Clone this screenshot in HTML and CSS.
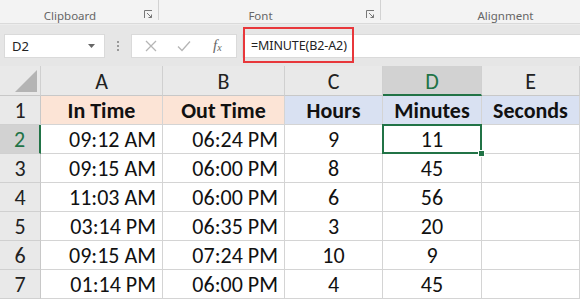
FILE: index.html
```html
<!DOCTYPE html>
<html>
<head>
<meta charset="utf-8">
<link rel="stylesheet" href="styles.css">
</head>
<body>
<div class="app">
  <div class="ribbon">
    <div class="group g-clip">
      <span class="glabel">Clipboard</span>
      <svg class="launcher" width="9" height="9" viewBox="0 0 9 9"><path d="M0.5 8V0.5H8" fill="none" stroke="#777" stroke-width="1"/><path d="M3 3L7.5 7.5M4.5 7.5H7.5V4.5" fill="none" stroke="#777" stroke-width="1"/></svg>
    </div>
    <div class="group g-font">
      <span class="glabel">Font</span>
      <svg class="launcher" width="9" height="9" viewBox="0 0 9 9"><path d="M0.5 8V0.5H8" fill="none" stroke="#777" stroke-width="1"/><path d="M3 3L7.5 7.5M4.5 7.5H7.5V4.5" fill="none" stroke="#777" stroke-width="1"/></svg>
    </div>
    <div class="group g-align">
      <span class="glabel">Alignment</span>
    </div>
  </div>
  <div class="fbar">
    <div class="namebox">
      <span>D2</span>
      <svg width="7" height="4" viewBox="0 0 7 4"><path d="M0 0H7L3.5 4Z" fill="#666"/></svg>
    </div>
    <div class="dots"><i></i><i></i><i></i></div>
    <div class="fbtns">
      <svg width="12" height="12" viewBox="0 0 12 12"><path d="M1 1L11 11M11 1L1 11" stroke="#b5b5b5" stroke-width="1.3" fill="none"/></svg>
      <svg width="14" height="12" viewBox="0 0 14 12"><path d="M1 6.5L5 10.5L13 1.5" stroke="#b5b5b5" stroke-width="1.3" fill="none"/></svg>
      <span class="fx">f<sub>x</sub></span>
    </div>
    <div class="finput">
      <span class="formula">=MINUTE(B2-A2)</span>
    </div>
  </div>
  <div class="sheet">
    <div class="ch corner"><span class="tri"></span></div>
    <div class="ch">A</div>
    <div class="ch">B</div>
    <div class="ch">C</div>
    <div class="ch sel">D</div>
    <div class="ch">E</div>

    <div class="rh">1</div>
    <div class="c hd peach">In Time</div>
    <div class="c hd peach">Out Time</div>
    <div class="c hd blue">Hours</div>
    <div class="c hd blue">Minutes</div>
    <div class="c hd blue">Seconds</div>

    <div class="rh sel">2</div>
    <div class="c r">09:12 AM</div>
    <div class="c r">06:24 PM</div>
    <div class="c m">9</div>
    <div class="c m active">11</div>
    <div class="c"></div>

    <div class="rh">3</div>
    <div class="c r">09:15 AM</div>
    <div class="c r">06:00 PM</div>
    <div class="c m">8</div>
    <div class="c m">45</div>
    <div class="c"></div>

    <div class="rh">4</div>
    <div class="c r">11:03 AM</div>
    <div class="c r">06:00 PM</div>
    <div class="c m">6</div>
    <div class="c m">56</div>
    <div class="c"></div>

    <div class="rh">5</div>
    <div class="c r">03:14 PM</div>
    <div class="c r">06:35 PM</div>
    <div class="c m">3</div>
    <div class="c m">20</div>
    <div class="c"></div>

    <div class="rh">6</div>
    <div class="c r">09:15 AM</div>
    <div class="c r">07:24 PM</div>
    <div class="c m">10</div>
    <div class="c m">9</div>
    <div class="c"></div>

    <div class="rh">7</div>
    <div class="c r">01:14 PM</div>
    <div class="c r">06:00 PM</div>
    <div class="c m">4</div>
    <div class="c m">45</div>
    <div class="c"></div>
  </div>
</div>
</body>
</html>
```
FILE: styles.css
```css
* { box-sizing: border-box; }
html, body { margin: 0; padding: 0; }
body { width: 580px; height: 300px; overflow: hidden; background: #fff; font-family: "Carlito", "Lato", "Liberation Sans", sans-serif; }
.app { display: flex; flex-direction: column; width: 580px; }

.ribbon { flex-shrink: 0; height: 24px; background: #f3f3f3; border-bottom: 1px solid #dadada; display: flex; }
.group { position: relative; display: flex; align-items: center; justify-content: center; border-right: 1px solid #d2d2d2; height: 20px; }
.g-clip { width: 159px; }
.g-font { width: 222px; }
.g-align { flex: 1; border-right: none; }
.glabel { font-family: "Noto Sans", "Open Sans", sans-serif; font-size: 11.5px; color: #666; margin-top: 10px; }
.g-clip .glabel { margin-left: -18px; }
.g-font .glabel { margin-left: -18px; }
.g-align .glabel { margin-left: 50px; }
.launcher { position: absolute; right: 5px; top: 10px; }

.fbar { flex-shrink: 0; height: 42px; background: #e6e6e6; display: flex; align-items: center; padding: 0 0 0 4px; border-top: 1px solid #ececec; }
.namebox { width: 101px; height: 24px; background: #fff; border: 1px solid #dadada; display: flex; align-items: center; justify-content: space-between; padding: 0 9px 0 7px; font-family: "Noto Sans", "Open Sans", sans-serif; font-size: 13px; color: #222; }
.dots { width: 26px; display: flex; flex-direction: column; align-items: center; gap: 2px; }
.dots i { display: block; width: 2px; height: 2px; background: #999; }
.fbtns { width: 106px; height: 24px; background: #fff; border: 1px solid #dadada; display: flex; align-items: center; padding-left: 13px; }
.fbtns svg:first-child { margin-right: 20px; }
.fbtns svg:nth-child(2) { margin-right: 22px; }
.fx { font-family: "Liberation Serif", "DejaVu Serif", serif; font-style: italic; font-size: 15px; color: #666; line-height: 1; }
.fx sub { font-size: 10px; vertical-align: -1px; }
.finput { flex: 1; height: 24px; background: #fff; border: 1px solid #dadada; border-right: none; margin-left: 5px; display: flex; align-items: center; padding-left: 8px; }
.formula { position: relative; font-family: "Noto Sans", "Open Sans", sans-serif; font-size: 12.5px; color: #222; letter-spacing: -0.1px; }
.formula::after { content: ""; position: absolute; left: -8px; right: -7px; top: -10px; bottom: -9px; border: 2px solid #e8373b; }

.sheet { flex-shrink: 0; display: grid; grid-template-columns: 41px 122px 122px 98px 99px 1fr; grid-template-rows: 30px repeat(7, 29px); }
.ch { background: #e9e9e9; border-right: 1px solid #d0d0d0; border-bottom: 1px solid #c8c8c8; display: flex; align-items: center; justify-content: center; font-size: 22px; color: #222; padding-top: 2px; }
.ch.sel { background: #d2d2d2; color: #217346; border-bottom: 2px solid #217346; }
.corner { position: relative; }
.tri { position: absolute; right: 3px; bottom: 3px; width: 0; height: 0; border-left: 22px solid transparent; border-bottom: 22px solid #b4b4b4; }
.rh { background: #e9e9e9; border-right: 1px solid #c8c8c8; border-bottom: 1px solid #d0d0d0; display: flex; align-items: center; justify-content: center; font-size: 22px; color: #222; }
.rh.sel { background: #d2d2d2; color: #217346; border-right: 2px solid #217346; }
.c { border-right: 1px solid #d4d4d4; border-bottom: 1px solid #d4d4d4; display: flex; align-items: center; font-size: 22px; color: #111; white-space: nowrap; }
.c.r { justify-content: flex-end; padding-right: 6px; }
.c.m { justify-content: center; }
.c.hd { justify-content: center; font-weight: bold; }
.peach { background: #fce4d6; }
.blue { background: #d9e1f2; }
.active { position: relative; }
.active::after { content: ""; position: absolute; left: -1px; top: -1px; right: -1px; bottom: -1px; border: 2px solid #217346; }
.active::before { content: ""; position: absolute; right: -4px; bottom: -4px; width: 5px; height: 5px; background: #217346; border: 1px solid #fff; z-index: 2; }
```
